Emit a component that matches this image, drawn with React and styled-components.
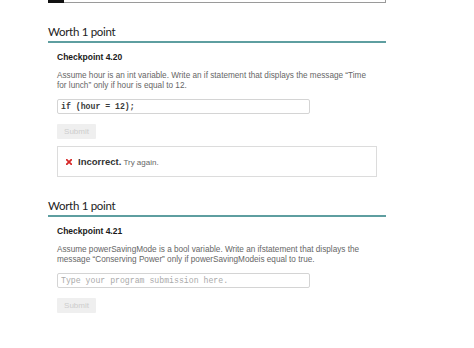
import React from "react";
import styled, { createGlobalStyle } from "styled-components";

const GlobalStyle = createGlobalStyle`
  html, body {
    margin: 0;
    padding: 0;
    background: #fff;
  }
`;

const Page = styled.div`
  width: 338px;
  margin-left: 48px;
`;

const Progress = styled.div`
  height: 2px;
  border-bottom: 1px solid #9a9a9a;
  border-right: 1px solid #9a9a9a;
`;

const ProgressFill = styled.div`
  width: 16px;
  height: 3px;
  background: #111;
`;

const Header = styled.h2`
  margin: 22px 0 0;
  padding-bottom: 2px;
  font-family: Lato, "Open Sans", sans-serif;
  font-weight: 400;
  font-size: 11.5px;
  letter-spacing: -0.3px;
  line-height: 14px;
  color: #222;
  border-bottom: 2px solid #5e9ea0;
`;

const Body = styled.div`
  padding-left: 9px;
  font-family: "Liberation Sans", Arial, sans-serif;
`;

const Title = styled.div`
  margin-top: 9px;
  font-weight: 700;
  font-size: 8.5px;
  line-height: 10px;
  color: #1a1a1a;
`;

const Prompt = styled.p`
  margin: 9px 0 0;
  width: 330px;
  font-size: 8.2px;
  line-height: 10px;
  color: #666;
  white-space: nowrap;
`;

const CodeInput = styled.div`
  box-sizing: border-box;
  margin-top: 8px;
  width: 253px;
  height: 15px;
  padding: 0 3px;
  border: 1px solid #d4d4d4;
  border-radius: 2px;
  font-family: "Liberation Mono", "Courier New", monospace;
  font-size: 8.2px;
  line-height: 13px;
  font-weight: ${(p) => (p.$empty ? 400 : 700)};
  color: ${(p) => (p.$empty ? "#aaa" : "#3a3a3a")};
  white-space: pre;
`;

const Submit = styled.button`
  display: block;
  box-sizing: border-box;
  margin-top: 10px;
  width: 39px;
  height: 15px;
  padding: 0;
  border: none;
  border-radius: 1px;
  background: #efefef;
  color: #cdcdcd;
  font-family: "Liberation Sans", Arial, sans-serif;
  font-size: 8px;
`;

const Feedback = styled.div`
  box-sizing: border-box;
  display: flex;
  align-items: center;
  gap: 6px;
  margin-top: 7px;
  width: 320px;
  height: 31px;
  padding-left: 8px;
  border: 1px solid #dcdcdc;
  font-size: 8px;
  color: #666;
`;

const Verdict = styled.b`
  font-size: 9.5px;
  color: #333;
`;

const Cross = () => (
  <svg width="6" height="6" viewBox="0 0 6 6">
    <path d="M0.8 0.8 L5.2 5.2 M5.2 0.8 L0.8 5.2" stroke="#d62828" strokeWidth="1.8" strokeLinecap="square" />
  </svg>
);

export default function App() {
  return (
    <Page>
      <GlobalStyle />
      <Progress>
        <ProgressFill />
      </Progress>

      <Header>Worth 1 point</Header>
      <Body>
        <Title>Checkpoint 4.20</Title>
        <Prompt>
          Assume hour is an int variable. Write an if statement that displays the message “Time
          <br />
          for lunch” only if hour is equal to 12.
        </Prompt>
        <CodeInput>if (hour = 12);</CodeInput>
        <Submit disabled>Submit</Submit>
        <Feedback>
          <Cross />
          <span>
            <Verdict>Incorrect.</Verdict> Try again.
          </span>
        </Feedback>
      </Body>

      <Header>Worth 1 point</Header>
      <Body>
        <Title>Checkpoint 4.21</Title>
        <Prompt>
          Assume powerSavingMode is a bool variable. Write an ifstatement that displays the
          <br />
          message “Conserving Power” only if powerSavingModeis equal to true.
        </Prompt>
        <CodeInput $empty>Type your program submission here.</CodeInput>
        <Submit disabled>Submit</Submit>
      </Body>
    </Page>
  );
}
